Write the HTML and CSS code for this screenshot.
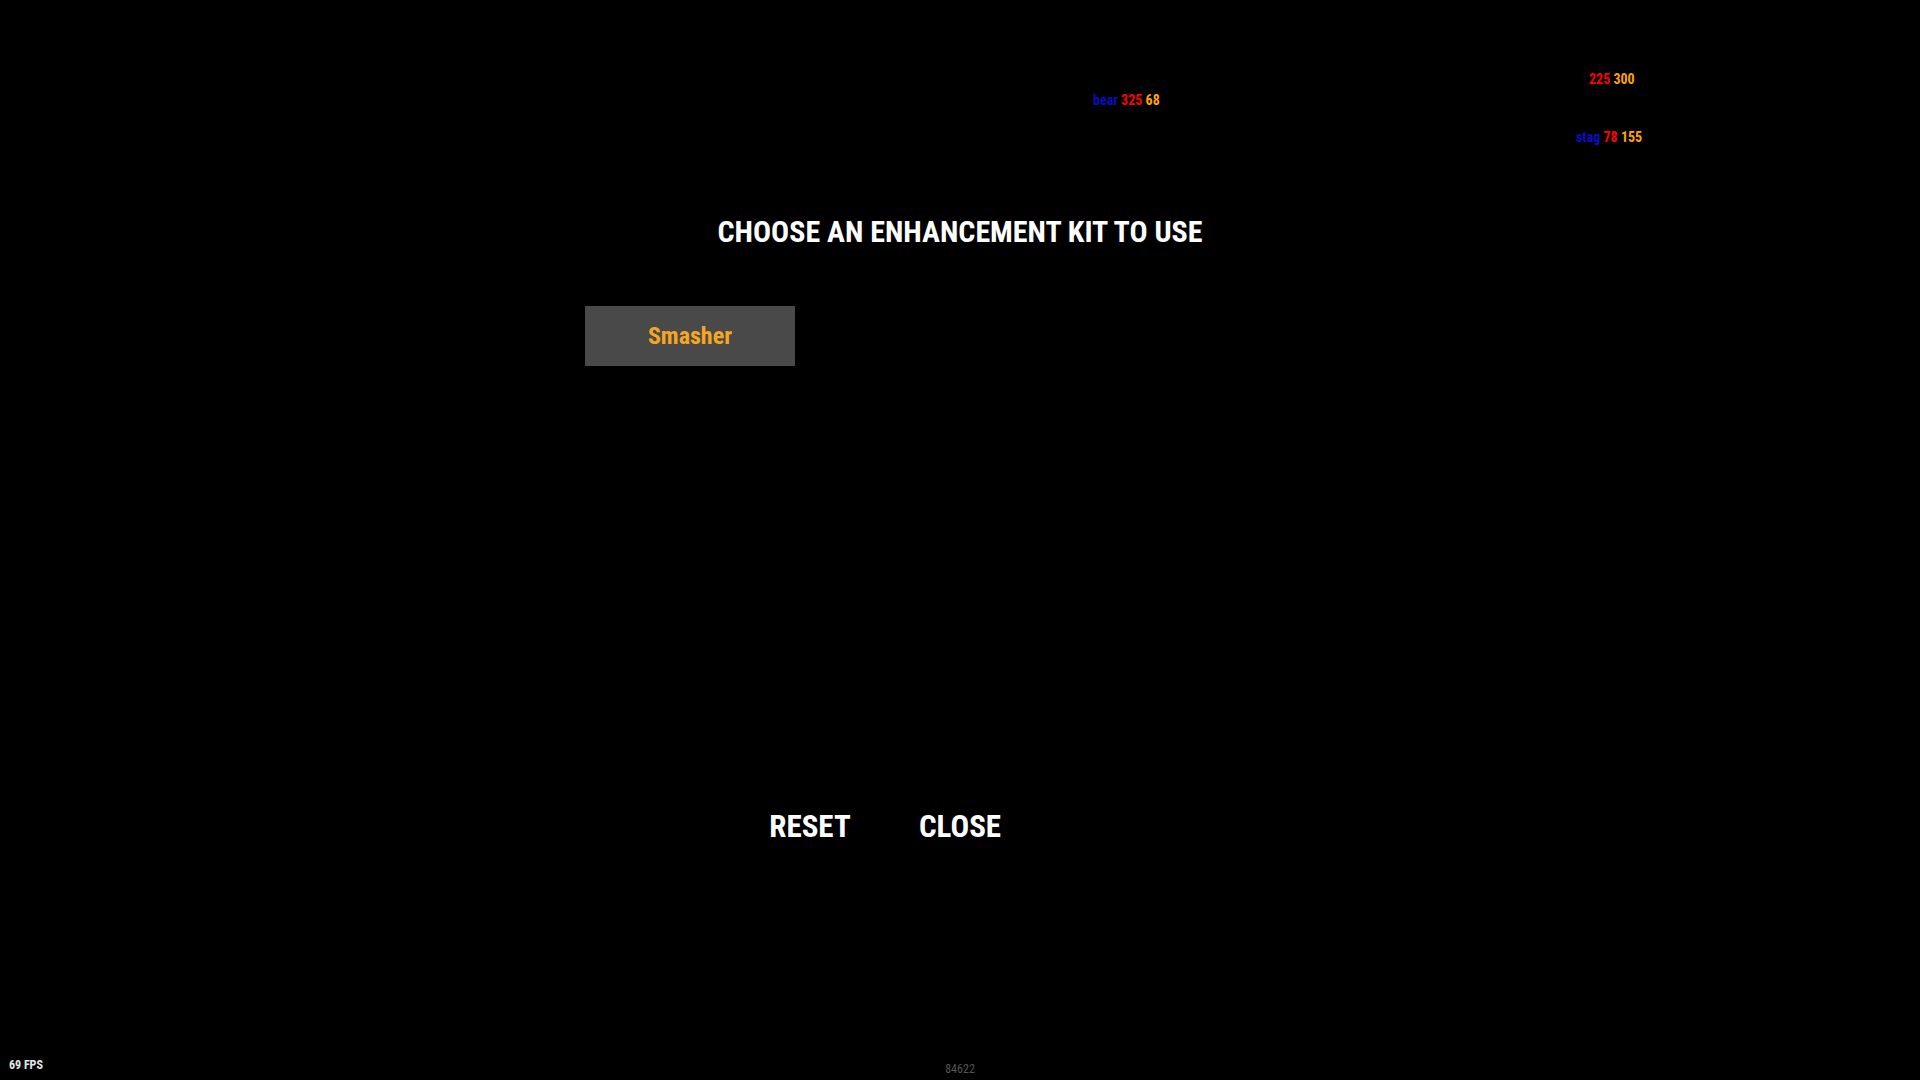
FILE: index.html
```html
<!DOCTYPE html>
<html lang="en">
<head>
<meta charset="utf-8">
<title>Enhancement Kit</title>
<link rel="stylesheet" href="styles.css">
</head>
<body>
<div class="stage">
  <div class="world-label label-bear"><span class="name">bear</span> <span class="hp">325</span> <span class="val">68</span></div>
  <div class="world-label label-top"><span class="hp">225</span> <span class="val">300</span></div>
  <div class="world-label label-stag"><span class="name">stag</span> <span class="hp">78</span> <span class="val">155</span></div>

  <main class="menu">
    <h1 class="title">CHOOSE AN ENHANCEMENT KIT TO USE</h1>
    <div class="kits">
      <button class="kit">Smasher</button>
    </div>
    <div class="actions">
      <button class="action">RESET</button>
      <button class="action">CLOSE</button>
      <span class="action action-empty"></span>
    </div>
  </main>

  <div class="fps">69 FPS</div>
  <div class="build">84622</div>
</div>
</body>
</html>
```
FILE: styles.css
```css
html, body {
  margin: 0;
  padding: 0;
  background: #000;
}
body {
  font-family: "Roboto Condensed", "Liberation Sans Narrow", "Roboto", sans-serif;
  font-weight: 700;
  color: #fff;
}
.stage {
  position: relative;
  width: 1920px;
  height: 1080px;
  overflow: hidden;
  background: #000;
}
.world-label {
  position: absolute;
  font-size: 14px;
  line-height: 16px;
  white-space: nowrap;
}
.world-label .name { color: #0c0cc4; }
.world-label .hp { color: #ff0000; }
.world-label .val { color: #ffa500; }
.label-bear { left: 1093px; top: 92px; }
.label-top { left: 1589px; top: 71px; }
.label-stag { left: 1576px; top: 129px; }

.menu {
  display: flex;
  flex-direction: column;
  align-items: center;
  padding-top: 214px;
}
.title {
  margin: 0;
  font-size: 30px;
  line-height: 36px;
  font-weight: 700;
  color: #fff;
}
.kits {
  width: 750px;
  margin-top: 56px;
  display: flex;
  flex-wrap: wrap;
  gap: 20px;
}
.kit {
  width: 210px;
  height: 60px;
  border: 0;
  padding: 0;
  background: #494949;
  color: #f5a623;
  font-family: inherit;
  font-weight: 700;
  font-size: 24px;
  display: flex;
  align-items: center;
  justify-content: center;
}
.actions {
  margin-top: 443px;
  display: flex;
}
.action {
  width: 150px;
  height: 36px;
  border: 0;
  padding: 0;
  background: transparent;
  color: #fff;
  font-family: inherit;
  font-weight: 700;
  font-size: 31px;
  line-height: 36px;
  text-align: center;
}
.action-empty { display: block; }

.fps {
  position: absolute;
  left: 9px;
  bottom: 8px;
  font-size: 12px;
  line-height: 14px;
  color: #e6e6e6;
}
.build {
  position: absolute;
  left: 0;
  right: 0;
  bottom: 4px;
  text-align: center;
  font-size: 12px;
  line-height: 14px;
  color: #555;
  font-weight: 400;
}
```
